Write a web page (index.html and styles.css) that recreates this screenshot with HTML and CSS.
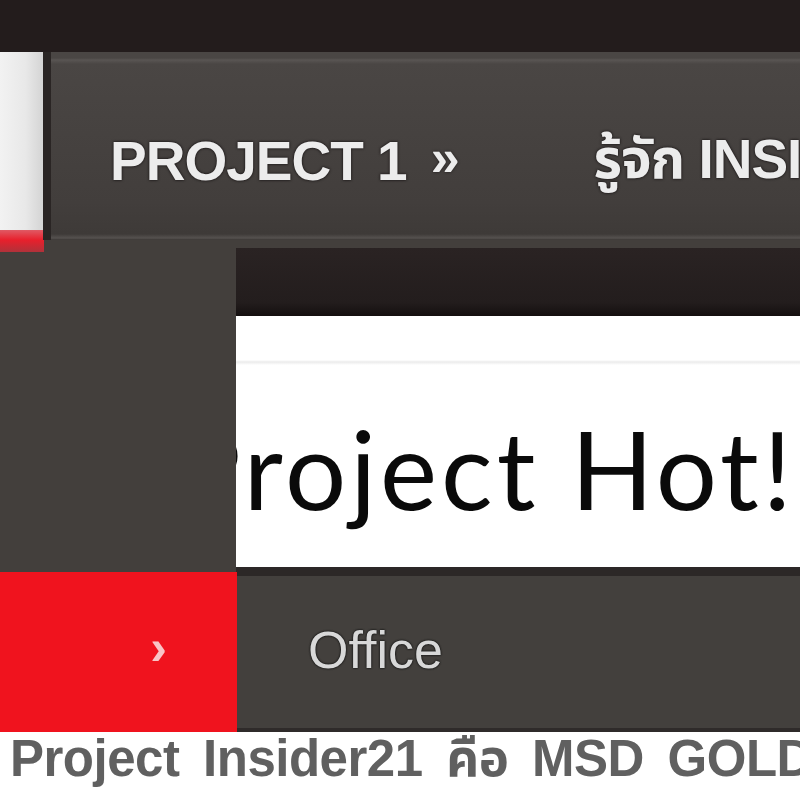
FILE: index.html
```html
<!DOCTYPE html>
<html lang="th">
<head>
<meta charset="utf-8">
<title>Project Insider21</title>
<link rel="stylesheet" href="styles.css">
</head>
<body>
<div class="topbar"></div>
<nav class="nav">
  <div class="logo"><div class="logo-red"></div></div>
  <a class="nav-item first">PROJECT 1</a>
  <span class="raquo">&raquo;</span>
  <a class="nav-item thai">รู้จัก INSIDER21</a>
</nav>
<section class="middle">
  <aside class="side"><div class="side-red"></div></aside>
  <div class="main">
    <div class="band"></div>
    <div class="hero"><h1 class="hero-title">Project Hot!</h1></div>
  </div>
</section>
<section class="lower">
  <div class="red-tab"><span class="chev">&rsaquo;</span></div>
  <div class="office"><span class="office-text">Office</span></div>
</section>
<p class="footer-text">Project Insider21 คือ MSD GOLD CITY</p>
</body>
</html>
```
FILE: styles.css
```css
html, body {
  margin: 0;
  padding: 0;
  background: #ffffff;
  overflow: hidden;
}
body {
  width: 800px;
  height: 800px;
  font-family: "Liberation Sans", "Noto Sans", "DejaVu Sans", sans-serif;
}
.topbar {
  height: 52px;
  background: #231c1c;
}
.nav {
  display: flex;
  align-items: center;
  box-sizing: border-box;
  height: 188px;
  padding-top: 30px;
  overflow: hidden;
  background: linear-gradient(#4a4644 0px, #4a4644 6px, #595553 8px, #4a4644 12px, #423e3c 150px, #3e3a38 182px, #55514f 186px, #3a3634 188px);
}
.logo {
  flex-shrink: 0;
  align-self: stretch;
  margin-top: -30px;
  width: 43px;
  border-right: 8px solid #2a2524;
  background: linear-gradient(90deg, #f2f2f2 0%, #e8e8e8 60%, #d4d4d4 100%);
  display: flex;
  flex-direction: column;
  justify-content: flex-end;
}
.logo-red {
  height: 10px;
  background: linear-gradient(#e05a64, #e8202c);
}
.nav-item {
  flex-shrink: 0;
  color: #ececec;
  font-weight: bold;
  font-size: 55px;
  letter-spacing: -1px;
  text-shadow: 0 0 3px #1e1a1a, 0 0 2px #1e1a1a;
  white-space: nowrap;
}
.first {
  margin-left: 59px;
}
.raquo {
  flex-shrink: 0;
  color: #ececec;
  font-weight: bold;
  font-size: 52px;
  margin-left: 24px;
  position: relative;
  top: -3px;
  text-shadow: 0 0 3px #1e1a1a;
}
.thai {
  margin-left: 134px;
  font-family: "Liberation Sans", "Noto Sans Thai", "Noto Sans", "DejaVu Sans", sans-serif;
}
.middle {
  display: grid;
  grid-template-columns: 236px 1fr;
  height: 332px;
}
.side {
  background: #433f3c;
  position: relative;
  z-index: 1;
}
.side-red {
  width: 44px;
  height: 12px;
  background: linear-gradient(#e8202c, #b0323a);
}
.main {
  background: #433f3c;
  padding-top: 8px;
  display: flex;
  flex-direction: column;
  min-width: 0;
}
.band {
  height: 68px;
  background: linear-gradient(#2a2323, #231d1d 80%, #140f0f);
}
.hero {
  flex: 1;
  background: linear-gradient(#ffffff 0, #ffffff 44px, #ebebeb 46px, #ffffff 49px);
  border-bottom: 5px solid #2c2827;
  overflow: hidden;
  display: flex;
  align-items: center;
}
.hero-title {
  margin: 52px 0 0 -60px;
  font-family: Lato, "Noto Sans", sans-serif;
  font-weight: 400;
  font-size: 108px;
  letter-spacing: 4px;
  color: #0a0a0a;
  white-space: nowrap;
  line-height: 1;
}
.lower {
  display: grid;
  grid-template-columns: 237px 1fr;
  height: 160px;
}
.red-tab {
  background: #f0131e;
  display: flex;
  align-items: center;
  justify-content: flex-end;
  padding-right: 70px;
}
.chev {
  color: #f9c4c6;
  font-size: 50px;
  font-weight: bold;
  position: relative;
  top: -5px;
}
.office {
  background: #43403d;
  border-top: 4px solid #2c2827;
  border-bottom: 4px solid #2f2b2a;
  display: flex;
  align-items: center;
  padding-left: 71px;
}
.office-text {
  color: #d8d8d8;
  font-size: 52px;
  text-shadow: 0 0 2px #111, 0 0 2px #111;
  position: relative;
  top: -2px;
}
.footer-text {
  margin: -3px 0 0 10px;
  font-size: 51px;
  font-weight: bold;
  color: #606060;
  white-space: nowrap;
  line-height: 60px;
  letter-spacing: -0.5px;
  word-spacing: 10px;
  font-family: "Liberation Sans", "Noto Sans Thai", "Noto Sans", "DejaVu Sans", sans-serif;
}
```
